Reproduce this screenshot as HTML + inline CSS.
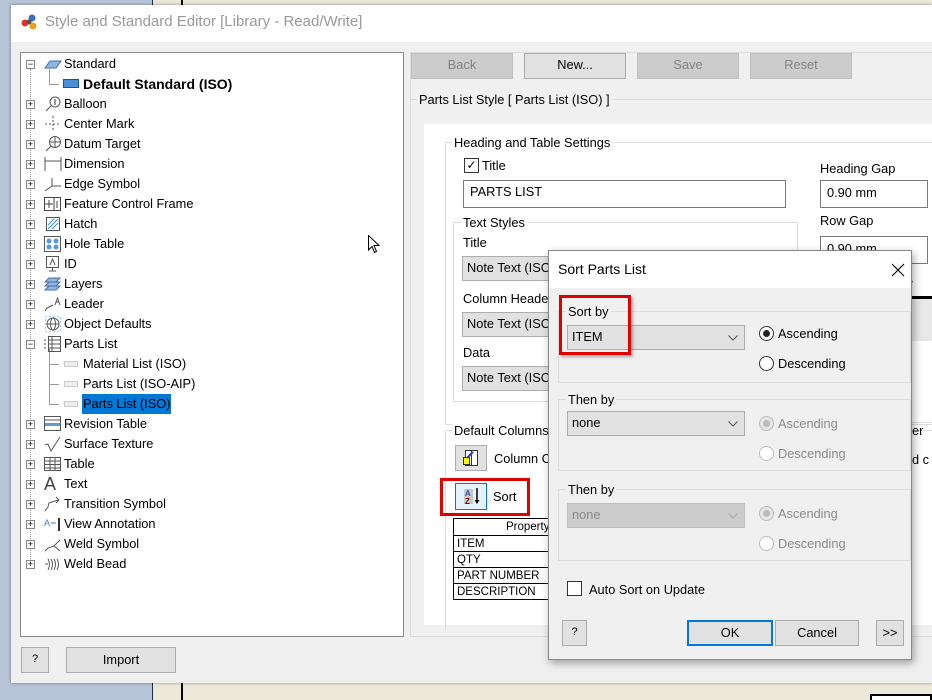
<!DOCTYPE html>
<html><head><meta charset="utf-8"><style>
*{box-sizing:border-box;margin:0;padding:0}
body{width:932px;height:700px;overflow:hidden;position:relative;background:#ece9d8;font-family:"Liberation Sans",sans-serif;font-size:12.8px;color:#000}
.a{position:absolute}
.btn{position:absolute;background:#e1e1e1;border:1px solid #adadad;text-align:center;line-height:22px}
.dis{background:#cccccc;border-color:#bfbfbf;color:#838383}
.tr{position:absolute;left:64px;height:18px;line-height:18px;white-space:nowrap}
.pm{position:absolute;left:26px;width:9px;height:9px;border:1px solid #888;background:#fff;font-size:9px;line-height:7px;text-align:center;color:#000}
.ic{position:absolute;left:44px;width:18px;height:16px}
.grp{position:absolute;border:1px solid #dcdcdc}
.inp{position:absolute;border:1px solid #7a7a7a;background:#fff;padding-left:6px;line-height:24px}
.cb{position:absolute;background:#e1e1e1;border:1px solid #adadad;padding-left:4px;line-height:22px}
.rad{position:absolute;width:15px;height:15px;border:1px solid #333;border-radius:50%;background:#fff}
svg{display:block}
</style></head><body>
<div class="a" style="left:0;top:0;width:152px;height:700px;background:#b7c4d7"></div>
<div class="a" style="left:152px;top:0;width:1px;height:700px;background:#1e2a4a"></div>
<div class="a" style="left:181px;top:0;width:2px;height:700px;background:#000"></div>
<div class="a" style="left:11px;top:5px;width:921px;height:678px;background:#f0f0f0;box-shadow:0 0 3px rgba(0,0,0,.4)"></div>
<div class="a" style="left:11px;top:5px;width:921px;height:37px;background:#fff"></div>
<div class="a" style="left:21px;top:13px;width:18px;height:18px">
<svg width="18" height="18"><circle cx="11" cy="5" r="3.5" fill="#3a6fc4"/><circle cx="4" cy="10" r="3.5" fill="#d33"/><circle cx="12" cy="13" r="3.5" fill="#e8a020"/><circle cx="8" cy="9" r="2.5" fill="#555"/></svg></div>
<div class="a" style="left:45px;top:13px;font-size:15px;color:#999">Style and Standard Editor [Library - Read/Write]</div>
<div class="a" style="left:20px;top:52px;width:384px;height:585px;background:#fff;border:1px solid #8c8c8c"></div>
<div class="a" style="left:368px;top:235px"><svg width="12" height="19"><path d="M0.5 0.5 V15 L4 11.5 L6.5 17.5 L8.5 16.5 L6 10.5 L11 10.5Z" fill="#fff" stroke="#000"/></svg></div>
<div class="a" style="left:30px;top:69px;width:1px;height:496px;border-left:1px dotted #999"></div>
<div class="a" style="left:49px;top:69px;width:1px;height:16px;background:#999"></div>
<div class="a" style="left:49px;top:84px;width:10px;height:1px;background:#999"></div>
<div class="a" style="left:49px;top:349px;width:1px;height:56px;background:#999"></div>
<div class="a" style="left:49px;top:364px;width:10px;height:1px;background:#999"></div>
<div class="a" style="left:49px;top:384px;width:10px;height:1px;background:#999"></div>
<div class="a" style="left:49px;top:404px;width:10px;height:1px;background:#999"></div>
<!-- tree -->
<div class="pm" style="top:60px">−</div><div class="ic" style="top:57px"><svg width="18" height="14"><path d="M1 11 L6 4 H17 L12 11Z" fill="#8fb6e3" stroke="#3a6fb0"/></svg></div><div class="tr" style="top:55px">Standard</div>
<div class="a" style="left:63px;top:79px;width:16px;height:9px;background:#4a8ed8;border:1px solid #1e4f8f"></div><div class="tr" style="left:83px;top:75px;font-weight:bold;font-size:14px">Default Standard (ISO)</div>
<div class="pm" style="top:100px">+</div><div class="ic" style="top:96px"><svg width="18" height="16" fill="none" stroke="#555"><circle cx="11" cy="6" r="5"/><path d="M7 10 L2 15"/><path d="M11 3 V9" stroke="#333"/></svg></div><div class="tr" style="top:95px">Balloon</div>
<div class="pm" style="top:120px">+</div><div class="ic" style="top:116px"><svg width="18" height="16" stroke="#555" stroke-dasharray="2 2"><path d="M9 0 V16 M1 8 H17"/></svg></div><div class="tr" style="top:115px">Center Mark</div>
<div class="pm" style="top:140px">+</div><div class="ic" style="top:136px"><svg width="18" height="16" fill="none" stroke="#555"><circle cx="11" cy="6" r="5.5"/><path d="M11 1 V11 M6 6 H16 M7 10 L2 15"/></svg></div><div class="tr" style="top:135px">Datum Target</div>
<div class="pm" style="top:160px">+</div><div class="ic" style="top:156px"><svg width="18" height="16" fill="none" stroke="#555"><path d="M1 1 V15 M17 1 V15 M1 5 H17"/></svg></div><div class="tr" style="top:155px">Dimension</div>
<div class="pm" style="top:180px">+</div><div class="ic" style="top:176px"><svg width="18" height="16" fill="none" stroke="#555"><path d="M8 2 V10 H17 M8 10 L1 15"/></svg></div><div class="tr" style="top:175px">Edge Symbol</div>
<div class="pm" style="top:200px">+</div><div class="ic" style="top:196px"><svg width="18" height="16" fill="none" stroke="#444"><rect x="0.5" y="1.5" width="16" height="13"/><path d="M10 1.5 V14.5 M5 4 V12 M1 8 H9 M13 5 V12"/></svg></div><div class="tr" style="top:195px">Feature Control Frame</div>
<div class="pm" style="top:220px">+</div><div class="ic" style="top:216px"><svg width="18" height="16" fill="none" stroke="#555"><rect x="2.5" y="1.5" width="13" height="13"/><path d="M4 13 L14 3 M4 9 L10 3 M8 13 L14 7" stroke="#3a8fe0"/></svg></div><div class="tr" style="top:215px">Hatch</div>
<div class="pm" style="top:240px">+</div><div class="ic" style="top:236px"><svg width="18" height="16"><rect x="0.5" y="0.5" width="16" height="15" fill="none" stroke="#555"/><circle cx="5" cy="5" r="2.5" fill="#5a9ad8"/><circle cx="12" cy="5" r="2.5" fill="#5a9ad8"/><circle cx="5" cy="11" r="2.5" fill="#5a9ad8"/><circle cx="12" cy="11" r="2.5" fill="#5a9ad8"/></svg></div><div class="tr" style="top:235px">Hole Table</div>
<div class="pm" style="top:260px">+</div><div class="ic" style="top:256px"><svg width="18" height="16" fill="none" stroke="#555"><rect x="2.5" y="0.5" width="12" height="11"/><path d="M8.5 12 V15 M5 15 H12 M6 9 L8.5 3 L11 9"/></svg></div><div class="tr" style="top:255px">ID</div>
<div class="pm" style="top:280px">+</div><div class="ic" style="top:276px"><svg width="18" height="16" fill="#8fb6e3" stroke="#4a6f99"><path d="M1 14 L5 10 H16 L12 14Z M1 10 L5 6 H16 L12 10Z M1 6 L5 2 H16 L12 6Z"/></svg></div><div class="tr" style="top:275px">Layers</div>
<div class="pm" style="top:300px">+</div><div class="ic" style="top:296px"><svg width="18" height="16" fill="none" stroke="#555"><path d="M1 15 L3 12 L9 9 M11 9 L13.5 2 L16 9 M12 6 H15"/></svg></div><div class="tr" style="top:295px">Leader</div>
<div class="pm" style="top:320px">+</div><div class="ic" style="top:316px"><svg width="18" height="16" fill="none" stroke="#555"><circle cx="9" cy="8" r="6"/><ellipse cx="9" cy="8" rx="2.5" ry="6"/><path d="M3 8 H15"/><rect x="1.5" y="0.5" width="15" height="15" stroke="#3a8fe0" stroke-dasharray="1 3"/></svg></div><div class="tr" style="top:315px">Object Defaults</div>
<div class="pm" style="top:340px">−</div><div class="ic" style="top:336px"><svg width="18" height="16" fill="none" stroke="#555"><rect x="4.5" y="0.5" width="12" height="15"/><path d="M4 4 H17 M4 8 H17 M4 12 H17 M8 1 V15 M0 4 H2 M0 8 H2 M0 12 H2"/></svg></div><div class="tr" style="top:335px">Parts List</div>
<div class="a" style="left:64px;top:361px;width:14px;height:6px;background:#eee;border:1px solid #ccc"></div><div class="tr" style="left:83px;top:355px">Material List (ISO)</div>
<div class="a" style="left:64px;top:381px;width:14px;height:6px;background:#eee;border:1px solid #ccc"></div><div class="tr" style="left:83px;top:375px">Parts List (ISO-AIP)</div>
<div class="a" style="left:64px;top:401px;width:14px;height:6px;background:#eee;border:1px solid #ccc"></div><div class="tr" style="left:82px;top:394px;background:#0078d7;color:#000;padding:0 1px;height:20px;line-height:20px">Parts List (ISO)</div>
<div class="pm" style="top:420px">+</div><div class="ic" style="top:416px"><svg width="18" height="16" fill="none" stroke="#555"><rect x="0.5" y="0.5" width="16" height="14"/><rect x="1" y="7" width="15" height="3" fill="#5a9ad8" stroke="none"/><path d="M1 4 H16"/></svg></div><div class="tr" style="top:415px">Revision Table</div>
<div class="pm" style="top:440px">+</div><div class="ic" style="top:436px"><svg width="18" height="16" fill="none" stroke="#555"><path d="M1 9 L4 8 L7 15 L16 1"/></svg></div><div class="tr" style="top:435px">Surface Texture</div>
<div class="pm" style="top:460px">+</div><div class="ic" style="top:456px"><svg width="18" height="16" fill="none" stroke="#555"><rect x="0.5" y="1.5" width="16" height="13"/><path d="M1 5 H16 M1 8.5 H16 M1 12 H16 M6 2 V14 M11 2 V14"/></svg></div><div class="tr" style="top:455px">Table</div>
<div class="pm" style="top:480px">+</div><div class="a" style="left:44px;top:474px;font-size:18px;color:#444;line-height:20px">A</div><div class="tr" style="top:475px">Text</div>
<div class="pm" style="top:500px">+</div><div class="ic" style="top:496px"><svg width="18" height="16" fill="none" stroke="#555"><path d="M1 15 L4 11 M4 11 L5 7 L14 4 M12 1 L15 4 L12 7"/></svg></div><div class="tr" style="top:495px">Transition Symbol</div>
<div class="pm" style="top:520px">+</div><div class="ic" style="top:516px"><svg width="18" height="16"><text x="0" y="10" font-size="9" fill="#3a7fd0" font-family="Liberation Sans">A</text><path d="M7 7 H12" stroke="#3a7fd0"/><path d="M15 2 V15" stroke="#333" stroke-width="2"/></svg></div><div class="tr" style="top:515px">View Annotation</div>
<div class="pm" style="top:540px">+</div><div class="ic" style="top:536px"><svg width="18" height="16" fill="none" stroke="#555"><path d="M1 15 L4 12 L10 10 L16 4 M10 10 L16 15"/></svg></div><div class="tr" style="top:535px">Weld Symbol</div>
<div class="pm" style="top:560px">+</div><div class="ic" style="top:556px"><svg width="18" height="16" fill="none" stroke="#555"><path d="M1 8 H4 M4 3 Q7 8 4 14 M7 3 Q10 8 7 14 M10 3 Q13 8 10 14 M13 3 Q16 8 13 14"/></svg></div><div class="tr" style="top:555px">Weld Bead</div>
<div class="btn" style="left:21px;top:647px;width:28px;height:26px;font-size:11px">?</div>
<div class="btn" style="left:66px;top:647px;width:110px;height:26px;line-height:24px">Import</div>
<!-- right panel -->
<div class="a" style="left:410px;top:52px;width:522px;height:585px;border:1px solid #dcdcdc;border-right:none"></div>
<div class="btn dis" style="left:411px;top:53px;width:102px;height:26px">Back</div>
<div class="btn" style="left:524px;top:53px;width:102px;height:26px">New...</div>
<div class="btn dis" style="left:637px;top:53px;width:102px;height:26px">Save</div>
<div class="btn dis" style="left:750px;top:53px;width:102px;height:26px">Reset</div>
<div class="a" style="left:410px;top:99px;width:522px;height:1px;background:#dcdcdc"></div>
<div class="a" style="left:417px;top:92px;background:#f0f0f0;padding:0 2px">Parts List Style [ Parts List (ISO) ]</div>
<div class="a" style="left:424px;top:124px;width:508px;height:501px;background:#fff"></div>
<div class="grp" style="left:445px;top:142px;width:490px;height:283px"></div>
<div class="a" style="left:452px;top:135px;background:#fff;padding:0 2px">Heading and Table Settings</div>
<div class="a" style="left:464px;top:158px;width:15px;height:15px;border:1px solid #333;font-size:12px;line-height:13px;text-align:center">✓</div>
<div class="a" style="left:482px;top:158px">Title</div>
<div class="inp" style="left:463px;top:180px;width:323px;height:28px;line-height:22px">PARTS LIST</div>
<div class="a" style="left:820px;top:161px">Heading Gap</div>
<div class="inp" style="left:820px;top:180px;width:108px;height:28px;line-height:24px">0.90 mm</div>
<div class="a" style="left:820px;top:213px">Row Gap</div>
<div class="inp" style="left:820px;top:236px;width:108px;height:28px">0.90 mm</div>
<div class="grp" style="left:453px;top:222px;width:345px;height:180px"></div>
<div class="a" style="left:461px;top:215px;background:#fff;padding:0 2px">Text Styles</div>
<div class="a" style="left:463px;top:235px">Title</div>
<div class="cb" style="left:462px;top:256px;width:100px;height:25px">Note Text (ISO</div>
<div class="a" style="left:463px;top:291px">Column Header</div>
<div class="cb" style="left:462px;top:312px;width:100px;height:25px">Note Text (ISO</div>
<div class="a" style="left:463px;top:345px">Data</div>
<div class="cb" style="left:462px;top:366px;width:100px;height:25px">Note Text (ISO</div>
<div class="grp" style="left:445px;top:430px;width:490px;height:200px;border-bottom:none;border-right:none"></div>
<div class="a" style="left:452px;top:423px;background:#fff;padding:0 2px">Default Columns</div>
<div class="btn" style="left:455px;top:445px;width:32px;height:26px"><svg width="30" height="24"><rect x="9.5" y="4.5" width="12" height="15" fill="#fff" stroke="#333"/><path d="M15.5 5 V19" stroke="#333"/><rect x="7.5" y="11.5" width="6" height="7" fill="#ff0" stroke="#333"/><path d="M11 12 L17 6" stroke="#2a3fd0" stroke-width="2"/></svg></div>
<div class="a" style="left:494px;top:451px">Column Ch</div>
<div class="a" style="left:440px;top:478px;width:90px;height:38px;border:3px solid #e00000"></div>
<div class="a" style="left:455px;top:483px;width:32px;height:27px;border:1px solid #0078d7;background:#e5f1fb"><svg width="30" height="25"><rect x="8" y="5" width="9" height="15" fill="#c8c8c8"/><text x="9" y="12" font-size="8" fill="#3355aa" font-weight="bold" font-family="Liberation Sans">A</text><text x="9" y="20" font-size="8" fill="#880000" font-weight="bold" font-family="Liberation Sans">Z</text><path d="M21 4 V19" stroke="#000" stroke-width="1.5"/><path d="M18.5 16 L21 20 L23.5 16Z" fill="#000"/></svg></div>
<div class="a" style="left:493px;top:489px">Sort</div>
<div class="a" style="left:453px;top:518px;width:100px;height:82px;border:1px solid #000;font-size:11.5px">
<div style="height:17px;border-bottom:1px solid #000;padding-left:52px;line-height:17px">Property</div>
<div style="height:16px;border-bottom:1px solid #000;padding-left:3px;line-height:17px">ITEM</div>
<div style="height:16px;border-bottom:1px solid #000;padding-left:3px;line-height:17px">QTY</div>
<div style="height:16px;border-bottom:1px solid #000;padding-left:3px;line-height:17px">PART NUMBER</div>
<div style="height:16px;padding-left:3px;line-height:17px">DESCRIPTION</div></div>
<div class="a" style="left:906px;top:274px">e</div>
<div class="a" style="left:910px;top:296px;width:22px;height:45px;background:#e8e8e8;border-top:3px solid #000"></div>
<div class="a" style="left:912px;top:422px;width:20px;height:1px;background:#ddd"></div>
<div class="a" style="left:912px;top:423px">er</div>
<div class="a" style="left:912px;top:452px">d c</div>
<div class="a" style="left:870px;top:694px;width:62px;height:6px;border:2px solid #000;border-bottom:none;background:#fff"></div>
<!-- dialog -->
<div class="a" style="left:548px;top:250px;width:364px;height:410px;background:#f0f0f0;border:1px solid #888;box-shadow:2px 3px 8px rgba(0,0,0,.35)"></div>
<div class="a" style="left:549px;top:251px;width:362px;height:37px;background:#fff"></div>
<div class="a" style="left:558px;top:261px;font-size:14px">Sort Parts List</div>
<div class="a" style="left:891px;top:263px"><svg width="14" height="14"><path d="M1 1 L13 13 M13 1 L1 13" stroke="#000" stroke-width="1.2"/></svg></div>
<div class="grp" style="left:558px;top:311px;width:353px;height:72px"></div>
<div class="a" style="left:566px;top:304px;background:#f0f0f0;padding:0 2px">Sort by</div>
<div class="cb" style="left:567px;top:325px;width:178px;height:25px">ITEM<svg style="position:absolute;right:6px;top:9px" width="10" height="6"><path d="M0.5 0.5 L5 5 L9.5 0.5" fill="none" stroke="#555"/></svg></div>
<div class="a" style="left:559px;top:295px;width:72px;height:60px;border:3px solid #e00000;box-shadow:2px 2px 3px rgba(0,0,0,.3)"></div>
<div class="rad" style="left:759px;top:326px"><div style="margin:3px;width:7px;height:7px;border-radius:50%;background:#222"></div></div>
<div class="a" style="left:778px;top:326px">Ascending</div>
<div class="rad" style="left:759px;top:356px"></div>
<div class="a" style="left:778px;top:356px">Descending</div>
<div class="grp" style="left:558px;top:399px;width:353px;height:72px"></div>
<div class="a" style="left:566px;top:392px;background:#f0f0f0;padding:0 2px">Then by</div>
<div class="cb" style="left:567px;top:411px;width:178px;height:25px">none<svg style="position:absolute;right:6px;top:9px" width="10" height="6"><path d="M0.5 0.5 L5 5 L9.5 0.5" fill="none" stroke="#555"/></svg></div>
<div class="rad" style="left:759px;top:416px;border-color:#bbb;background:#e6e6e6"><div style="margin:3px;width:7px;height:7px;border-radius:50%;background:#bbb"></div></div>
<div class="a" style="left:778px;top:416px;color:#8a8a8a">Ascending</div>
<div class="rad" style="left:759px;top:446px;border-color:#bbb"></div>
<div class="a" style="left:778px;top:446px;color:#8a8a8a">Descending</div>
<div class="grp" style="left:558px;top:489px;width:353px;height:72px"></div>
<div class="a" style="left:566px;top:482px;background:#f0f0f0;padding:0 2px">Then by</div>
<div class="cb" style="left:567px;top:503px;width:178px;height:25px;background:#cccccc;border-color:#bfbfbf;color:#8a8a8a">none<svg style="position:absolute;right:6px;top:9px" width="10" height="6"><path d="M0.5 0.5 L5 5 L9.5 0.5" fill="none" stroke="#aaa"/></svg></div>
<div class="rad" style="left:759px;top:506px;border-color:#bbb;background:#e6e6e6"><div style="margin:3px;width:7px;height:7px;border-radius:50%;background:#bbb"></div></div>
<div class="a" style="left:778px;top:506px;color:#8a8a8a">Ascending</div>
<div class="rad" style="left:759px;top:536px;border-color:#bbb"></div>
<div class="a" style="left:778px;top:536px;color:#8a8a8a">Descending</div>
<div class="a" style="left:567px;top:581px;width:15px;height:15px;border:1px solid #333;background:#fff"></div>
<div class="a" style="left:589px;top:582px">Auto Sort on Update</div>
<div class="btn" style="left:562px;top:620px;width:25px;height:26px;font-size:11px">?</div>
<div class="btn" style="left:687px;top:620px;width:86px;height:26px;border:2px solid #0078d7;line-height:22px">OK</div>
<div class="btn" style="left:775px;top:620px;width:84px;height:26px;line-height:24px">Cancel</div>
<div class="btn" style="left:876px;top:620px;width:28px;height:26px;line-height:24px">&gt;&gt;</div>
</body></html>
